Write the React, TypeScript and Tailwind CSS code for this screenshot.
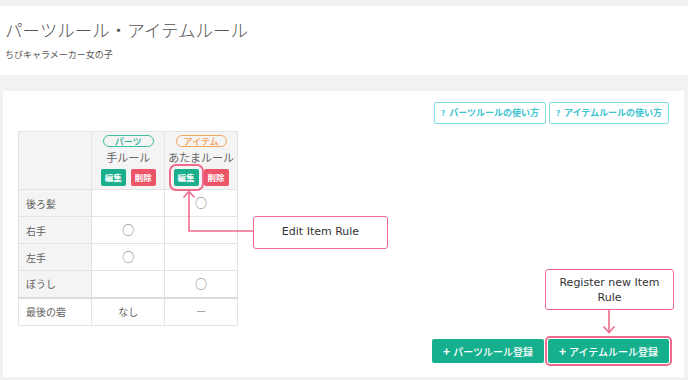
import React from "react";

const jp = { fontFamily: '"Noto Sans CJK JP", "Noto Sans", sans-serif' };

const rows = [
  { label: "後ろ髪", parts: "", item: "○" },
  { label: "右手", parts: "○", item: "" },
  { label: "左手", parts: "○", item: "" },
  { label: "ぼうし", parts: "", item: "○" },
];

const RuleHead = ({
  kind,
  name,
  highlight,
}: {
  kind: "parts" | "item";
  name: string;
  highlight?: boolean;
}) => (
  <th className="border border-[#e3e3e3] bg-[#f4f4f4] p-0 align-top font-normal">
    <div className="flex flex-col items-center pt-[3px]">
      {kind === "parts" ? (
        <span className="flex h-[12px] w-[51px] items-center justify-center rounded-full border border-[#3fbfa3] text-[9px] font-medium leading-none text-[#2eb394]">
          パーツ
        </span>
      ) : (
        <span className="flex h-[12px] w-[51px] items-center justify-center rounded-full border border-[#f6a45c] text-[9px] font-medium leading-none text-[#f39a4c]">
          アイテム
        </span>
      )}
      <span className="mt-[3px] text-[11px] leading-[14px] text-[#666]">{name}</span>
      <div className="mt-[5px] flex gap-[5px]">
        <span
          className={
            "flex h-[17px] w-[25px] items-center justify-center rounded-[2px] bg-[#1aae8c] text-[8.5px] font-bold text-white " +
            (highlight ? "outline-2 outline-offset-[3px] outline-[#ef6b8c]" : "")
          }
        >
          編集
        </span>
        <span className="flex h-[17px] w-[25px] items-center justify-center rounded-[2px] bg-[#ec5468] text-[8.5px] font-bold text-white">
          削除
        </span>
      </div>
    </div>
  </th>
);

const App = () => {
  return (
    <div className="relative h-[380px] w-[688px] overflow-hidden bg-[#f2f2f2] pt-[6px]" style={jp}>
      {/* header */}
      <div className="h-[69px] bg-white px-[5px] pt-[13px]">
        <div className="text-[17.5px] font-light leading-[22px] text-[#555]">パーツルール・アイテムルール</div>
        <div className="mt-[8px] text-[9px] leading-[12px] text-[#555]">ちびキャラメーカー女の子</div>
      </div>

      {/* panel */}
      <div className="ml-[3px] mr-[4px] mt-[16px] flex h-[286px] flex-col bg-white px-[15px] pt-[11px]">
        <div className="flex justify-end gap-[3px]">
          <button className="flex h-[22px] w-[112px] items-center justify-center gap-[4px] rounded-[2px] border-[1.5px] border-[#7fdde5] text-[9px] font-bold text-[#3cc4cf]">
            <span className="text-[8px]">?</span>パーツルールの使い方
          </button>
          <button className="flex h-[22px] w-[120px] items-center justify-center gap-[4px] rounded-[2px] border-[1.5px] border-[#7fdde5] text-[9px] font-bold text-[#3cc4cf]">
            <span className="text-[8px]">?</span>アイテムルールの使い方
          </button>
        </div>

        <table className="mt-[7px] w-[220px] border-collapse text-[10px] text-[#606060]">
          <thead>
            <tr className="h-[58px]">
              <th className="w-[74px] border border-[#e3e3e3] bg-[#f4f4f4]"></th>
              <RuleHead kind="parts" name="手ルール" />
              <RuleHead kind="item" name="あたまルール" highlight />
            </tr>
          </thead>
          <tbody>
            {rows.map((r) => (
              <tr key={r.label} className="h-[27px]">
                <td className="border border-[#e3e3e3] bg-[#f4f4f4] pl-[7px]">{r.label}</td>
                <td className="w-[73px] border border-[#e3e3e3] text-center text-[12px] text-[#777]">{r.parts}</td>
                <td className="w-[73px] border border-[#e3e3e3] text-center text-[12px] text-[#777]">{r.item}</td>
              </tr>
            ))}
            <tr className="h-[28px] border-t-2 border-[#dcdcdc]">
              <td className="border border-[#e3e3e3] pl-[7px]">最後の砦</td>
              <td className="border border-[#e3e3e3] text-center">なし</td>
              <td className="border border-[#e3e3e3] text-center text-[#999]">ー</td>
            </tr>
          </tbody>
        </table>

        <div className="mt-[13px] flex justify-end gap-[4px]">
          <button className="flex h-[24px] w-[112px] items-center justify-center gap-[3px] rounded-[2px] bg-[#16b08e] text-[10px] font-medium text-white">
            <span className="text-[12px] font-bold leading-none">+</span>パーツルール登録
          </button>
          <button className="flex h-[24px] w-[121px] items-center justify-center gap-[3px] rounded-[2px] bg-[#16b08e] text-[10px] font-medium text-white outline-2 outline-offset-[1px] outline-[#ef6b8c]">
            <span className="text-[12px] font-bold leading-none">+</span>アイテムルール登録
          </button>
        </div>
      </div>

      {/* annotations */}
      <svg className="absolute left-0 top-0" width="688" height="380" fill="none">
        <path d="M253 231 H189 V192" stroke="#ef6b8c" strokeWidth="1.6" />
        <path d="M183.5 197.5 L189 191.5 L194.5 197.5" stroke="#ef6b8c" strokeWidth="1.6" />
        <path d="M609 310 V332" stroke="#ef6b8c" strokeWidth="1.6" />
        <path d="M603.5 326.5 L609 332.5 L614.5 326.5" stroke="#ef6b8c" strokeWidth="1.6" />
      </svg>
      <div
        className="absolute left-[253px] top-[216px] flex h-[33px] w-[135px] items-center justify-center rounded-[3px] border-[1.5px] border-[#ef6b8c] bg-white text-[11px] text-[#333]"
        style={{ fontFamily: '"DejaVu Sans", sans-serif' }}
      >
        Edit Item Rule
      </div>
      <div
        className="absolute left-[545px] top-[269px] flex h-[41px] w-[129px] items-center justify-center rounded-[3px] border-[1.5px] border-[#ef6b8c] bg-white text-center text-[11px] leading-[15px] text-[#333]"
        style={{ fontFamily: '"DejaVu Sans", sans-serif' }}
      >
        Register new Item
        <br />
        Rule
      </div>
    </div>
  );
};

export default App;
